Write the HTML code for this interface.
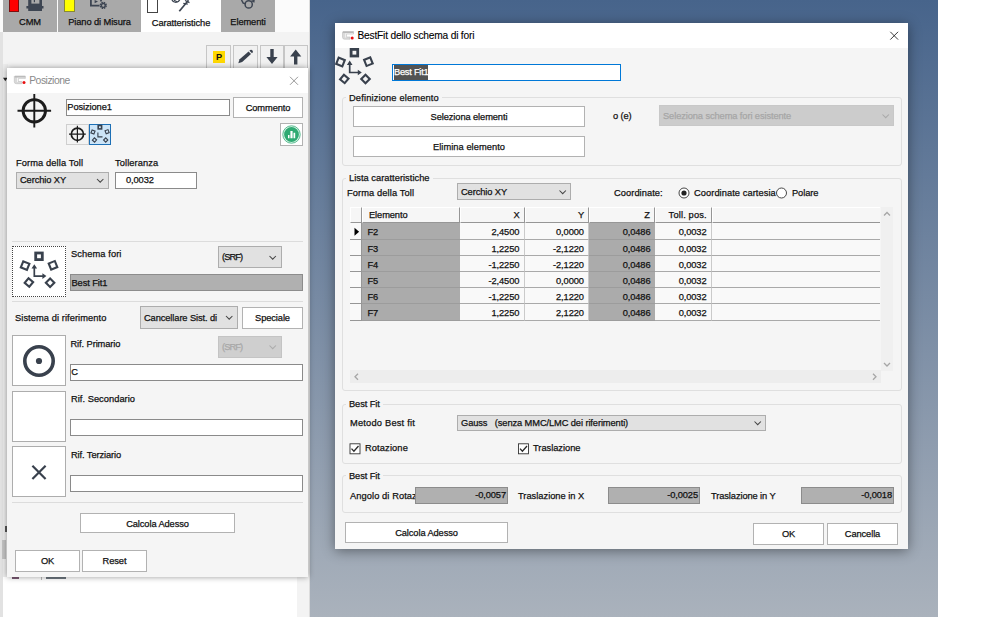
<!DOCTYPE html>
<html lang="it">
<head>
<meta charset="utf-8">
<title>BestFit dello schema di fori</title>
<style>
*{box-sizing:border-box;margin:0;padding:0}
html,body{width:999px;height:617px;overflow:hidden;background:#fff}
body{position:relative;font-family:"Liberation Sans",sans-serif;font-size:9.3px;color:#111;font-weight:normal;letter-spacing:-0.1px;-webkit-text-stroke:0.25px}
.a{position:absolute}
.t{position:absolute;white-space:nowrap;line-height:12px}
.btn{position:absolute;background:#fff;border:1px solid #b2b2b2;text-align:center;white-space:nowrap}
.inp{position:absolute;background:#fff;border:1px solid #8a8a8a;white-space:nowrap;overflow:hidden}
.cmb{position:absolute;background:#e1e1e1;border:1px solid #adadad;white-space:nowrap;overflow:hidden}
.gf{position:absolute;background:#b0b0b0;border:1px solid #8c8c8c;white-space:nowrap;overflow:hidden}
.sep{position:absolute;height:1px;background:#dcdcdc}
.grp{position:absolute;border:1px solid #dfdfdf;border-radius:3px}
.gl{position:absolute;background:#f5f5f5;padding:0 3px;white-space:nowrap;line-height:12px}
.box{position:absolute;background:#fff;border:1px solid #adadad}
svg{position:absolute;overflow:visible}
.th{position:absolute;background:#f6f6f6;border-right:1.5px solid #969696;border-bottom:1.5px solid #969696;border-top:1px solid #fff;border-left:1px solid #fff;line-height:15.6px;white-space:nowrap;overflow:hidden}
.td{position:absolute;background:#f9f9f9;border-bottom:1px solid #a9a9a9;border-right:1px solid #cacaca;line-height:19.6px;white-space:nowrap;overflow:hidden}
.td.g{background:#ababab;border-bottom:1px solid #9c9c9c;border-right:0}
.td.rh{background:#f9f9f9;border-right:1.5px solid #969696;border-bottom:1.5px solid #969696}

</style>
</head>
<body>
<!-- viewport gradient -->
<div class="a" id="bg" style="left:310px;top:0;width:628px;height:617px;background:linear-gradient(180deg,rgb(71,100,139),rgb(170,178,188))"></div>

<!-- left panel -->
<div class="a" id="lp" style="left:0;top:0;width:310px;height:617px;background:#f3f3f3"></div>
<div class="a" style="left:0;top:0;width:309px;height:32px;background:#fbfbfb"></div>
<div class="a" style="left:308.5px;top:0;width:1.5px;height:617px;background:#dcdcdc"></div>
<div class="a" style="left:0;top:577px;width:297px;height:40px;background:#fff"></div>
<div class="a" style="left:0;top:32px;width:2.5px;height:585px;background:#e2e2e2"></div>
<div class="a" style="left:2.5px;top:64px;width:5px;height:513px;background:#ececec"></div>
<div class="a" style="left:1.5px;top:539.5px;width:4.5px;height:19.5px;background:#c2c2c2"></div>
<div class="a" style="left:5px;top:526px;width:1.5px;height:6px;background:#555"></div>
<svg style="left:3px;top:77px" width="5" height="5" viewBox="0 0 5 5"><path d="M0 0.8 H4.6 L2.3 4.2 Z" fill="#222"/></svg>
<div class="a" style="left:12.3px;top:577px;width:7.2px;height:1.5px;background:#5a3050;opacity:.8"></div>
<div class="a" style="left:40.5px;top:577px;width:1px;height:2.5px;background:#bbb"></div>
<div class="a" style="left:46px;top:577px;width:20px;height:1.5px;background:#4a5560;opacity:.8"></div>

<!-- tabs -->
<div class="a" style="left:3px;top:0;width:54px;height:32px;background:#a9a9a9"></div>
<div class="a" style="left:58px;top:0;width:83px;height:32px;background:#a9a9a9"></div>
<div class="a" style="left:141px;top:0;width:80px;height:32px;background:#fff"></div>
<div class="a" style="left:221px;top:0;width:54px;height:32px;background:#a9a9a9"></div>
<div class="a" style="left:9px;top:0;width:10px;height:12px;background:#ff0000;border:1px solid #7a1010;border-top:0"></div>
<div class="a" style="left:64px;top:0;width:11px;height:12px;background:#ffff00;border:1px solid #8a8a30;border-top:0"></div>
<div class="a" style="left:147px;top:0;width:11px;height:13px;background:#fff;border:1px solid #444;border-top:0"></div>
<div class="t" style="left:3px;width:54px;top:16px;text-align:center">CMM</div>
<div class="t" style="left:58px;width:83px;top:16px;text-align:center">Piano di Misura</div>
<div class="t" style="left:141px;width:80px;top:17px;text-align:center">Caratteristiche</div>
<div class="t" style="left:221px;width:54px;top:16px;text-align:center">Elementi</div>

<!-- toolbar buttons -->
<div class="btn" style="left:206px;top:45px;width:25px;height:24px;background:#f1f1f1;border-color:#c6c6c6"></div>
<div class="btn" style="left:233px;top:45px;width:25px;height:24px;background:#f1f1f1;border-color:#c6c6c6"></div>
<div class="btn" style="left:260px;top:45px;width:24px;height:24px;background:#f1f1f1;border-color:#c6c6c6"></div>
<div class="btn" style="left:284px;top:45px;width:24px;height:24px;background:#f1f1f1;border-color:#c6c6c6"></div>
<div class="a" style="left:213px;top:51px;width:12px;height:12px;background:#ffd800;text-align:center;line-height:12.5px;font-size:9.2px;font-weight:bold;-webkit-text-stroke:0">P</div>

<!-- Posizione dialog -->
<div class="a" id="d1" style="left:7px;top:68px;width:301px;height:509px;background:#f5f5f5;box-shadow:0 0 6px rgba(0,0,0,.4)"></div>
<div class="a" style="left:7px;top:68px;width:301px;height:25px;background:#fff"></div>
<div class="t" style="left:29.2px;top:74.5px;font-size:10.4px;color:#8a8a8a;letter-spacing:-0.5px;-webkit-text-stroke:0">Posizione</div>

<div class="inp" style="left:66px;top:99px;width:164px;height:17px;line-height:15px;padding-left:0.3px">Posizione1</div>
<div class="btn" style="left:233px;top:97px;width:70px;height:21px;line-height:20px">Commento</div>
<div class="btn" style="left:66px;top:123.5px;width:23px;height:21.5px;background:#f3f3f3;border-color:#cfcfcf"></div>
<div class="btn" style="left:88.7px;top:123.5px;width:22.5px;height:21.5px;background:#cce4f7;border:1.4px solid #1c6fb5"></div>
<div class="btn" style="left:280px;top:123px;width:23px;height:23px"></div>

<div class="t" style="left:16px;top:157px;letter-spacing:0.1px">Forma della Toll</div>
<div class="t" style="left:115px;top:157px;letter-spacing:0.09px">Tolleranza</div>
<div class="cmb" style="left:16px;top:172px;width:93px;height:17px;line-height:15px;padding-left:3px">Cerchio XY</div>
<div class="inp" style="left:115px;top:172px;width:82px;height:17px;line-height:15px;padding-left:10px">0,0032</div>

<div class="sep" style="left:12px;top:241px;width:291px"></div>
<div class="box" style="left:12px;top:246px;width:54px;height:51px;border:1px dotted #444"></div>
<div class="t" style="left:71px;top:248px;letter-spacing:0.08px">Schema fori</div>
<div class="cmb" style="left:218px;top:246px;width:64px;height:22px;line-height:21px;padding-left:3px;letter-spacing:-0.9px">(SRF)</div>
<div class="gf" style="left:70px;top:274px;width:233px;height:17px;line-height:17px;padding-left:0.5px">Best Fit1</div>
<div class="sep" style="left:12px;top:301px;width:291px"></div>

<div class="t" style="left:15px;top:312px;letter-spacing:0.07px">Sistema di riferimento</div>
<div class="cmb" style="left:140px;top:306px;width:98px;height:23px;line-height:23px;padding-left:3px">Cancellare Sist. di</div>
<div class="btn" style="left:242px;top:307px;width:61px;height:22px;line-height:21px">Speciale</div>

<div class="box" style="left:12px;top:335px;width:54px;height:51px"></div>
<div class="t" style="left:70.5px;top:338px">Rif. Primario</div>
<div class="cmb" style="left:218px;top:336px;width:64px;height:22px;line-height:20px;padding-left:3px;background:#cfcfcf;border-color:#c4c4c4;color:#a8a8a8;letter-spacing:-0.9px">(SRF)</div>
<div class="inp" style="left:70px;top:364px;width:233px;height:17px;line-height:15px;padding-left:0.3px">C</div>

<div class="box" style="left:12px;top:391px;width:54px;height:51px"></div>
<div class="t" style="left:71px;top:393px;letter-spacing:0.03px">Rif. Secondario</div>
<div class="inp" style="left:70px;top:419px;width:233px;height:17px"></div>

<div class="box" style="left:12px;top:446px;width:54px;height:51px"></div>
<div class="t" style="left:71px;top:449px">Rif. Terziario</div>
<div class="inp" style="left:70px;top:475px;width:233px;height:17px"></div>
<div class="sep" style="left:12px;top:502px;width:291px"></div>

<div class="btn" style="left:80px;top:513px;width:155px;height:20px;line-height:21px">Calcola Adesso</div>
<div class="btn" style="left:15px;top:550px;width:65px;height:22px;line-height:21px">OK</div>
<div class="btn" style="left:82px;top:550px;width:65px;height:22px;line-height:21px">Reset</div>

<!-- BestFit dialog -->
<div class="a" id="d2" style="left:335px;top:23px;width:573px;height:526px;background:#f5f5f5;box-shadow:0 2px 12px rgba(0,0,0,.42)"></div>
<div class="a" style="left:335px;top:23px;width:573px;height:25px;background:#fff"></div>
<div class="t" style="left:357.5px;top:30.2px;font-size:10.2px;color:#000;font-weight:normal;letter-spacing:-0.2px;-webkit-text-stroke:0.1px">BestFit dello schema di fori</div>

<div class="inp" style="left:392px;top:64px;width:229px;height:17px;border-color:#0078d7;line-height:15px;padding-left:1px"><span style="background:#535353;color:#fff;display:inline-block;height:15px;letter-spacing:-0.25px">Best Fit1</span></div>

<div class="grp" style="left:342px;top:97px;width:560px;height:69px"></div>
<div class="gl" style="left:346px;top:92px;letter-spacing:0.15px">Definizione elemento</div>
<div class="btn" style="left:353px;top:106px;width:232px;height:21px;line-height:20px">Seleziona elementi</div>
<div class="btn" style="left:353px;top:136px;width:232px;height:21px;line-height:20px;letter-spacing:0.05px">Elimina elemento</div>
<div class="t" style="left:613px;top:110px">o (e)</div>
<div class="cmb" style="left:659px;top:105px;width:235px;height:21px;line-height:20px;padding-left:3px;background:#cccccc;border-color:#c8c8c8;color:#a6a6a6">Seleziona schema fori esistente</div>

<div class="grp" style="left:342px;top:178px;width:560px;height:213px"></div>
<div class="gl" style="left:346px;top:172.3px;letter-spacing:0.02px">Lista caratteristiche</div>
<div class="t" style="left:347px;top:187px;letter-spacing:0.1px">Forma della Toll</div>
<div class="cmb" style="left:457px;top:183px;width:114px;height:17px;line-height:16px;padding-left:3px">Cerchio XY</div>
<div class="t" style="left:614px;top:187px;letter-spacing:0.06px">Coordinate:</div>
<div class="t" style="left:694px;top:187px;letter-spacing:0.06px">Coordinate cartesia</div>
<div class="t" style="left:792px;top:187px">Polare</div>

<!-- table -->
<div class="a" style="left:350px;top:206.5px;width:543px;height:177px;background:#f5f5f5"></div>
<div class="th" style="left:350px;top:206.5px;width:12.0px;height:16.8px;text-align:left;padding-right:4px"></div>
<div class="th" style="left:362px;top:206.5px;width:97.5px;height:16.8px;text-align:left;padding-left:6px">Elemento</div>
<div class="th" style="left:459.5px;top:206.5px;width:65.1px;height:16.8px;text-align:right;padding-right:4px">X</div>
<div class="th" style="left:524.6px;top:206.5px;width:64.6px;height:16.8px;text-align:right;padding-right:4px">Y</div>
<div class="th" style="left:589.2px;top:206.5px;width:65.6px;height:16.8px;text-align:right;padding-right:4px">Z</div>
<div class="th" style="left:654.8px;top:206.5px;width:57.0px;height:16.8px;text-align:right;padding-right:4px;letter-spacing:0.15px">Toll. pos.</div>
<div class="th" style="left:711.8px;top:206.5px;width:168.7px;height:16.8px;text-align:right;padding-right:4px;border-right:0"></div>
<div class="td rh" style="left:350px;top:223.30px;width:12.0px;height:16.22px;text-align:left;padding-right:4.3px"></div>
<div class="td g" style="left:362px;top:223.30px;width:97.5px;height:16.22px;text-align:left;padding-left:5.5px">F2</div>
<div class="td" style="left:459.5px;top:223.30px;width:65.1px;height:16.22px;text-align:right;padding-right:4.3px">2,4500</div>
<div class="td" style="left:524.6px;top:223.30px;width:64.6px;height:16.22px;text-align:right;padding-right:4.3px">0,0000</div>
<div class="td g" style="left:589.2px;top:223.30px;width:65.6px;height:16.22px;text-align:right;padding-right:4.3px">0,0486</div>
<div class="td" style="left:654.8px;top:223.30px;width:57.0px;height:16.22px;text-align:right;padding-right:4.3px">0,0032</div>
<div class="td" style="left:711.8px;top:223.30px;width:168.7px;height:16.22px;text-align:right;padding-right:4.3px;border-right:0"></div>
<div class="td rh" style="left:350px;top:239.52px;width:12.0px;height:16.22px;text-align:left;padding-right:4.3px"></div>
<div class="td g" style="left:362px;top:239.52px;width:97.5px;height:16.22px;text-align:left;padding-left:5.5px">F3</div>
<div class="td" style="left:459.5px;top:239.52px;width:65.1px;height:16.22px;text-align:right;padding-right:4.3px">1,2250</div>
<div class="td" style="left:524.6px;top:239.52px;width:64.6px;height:16.22px;text-align:right;padding-right:4.3px">-2,1220</div>
<div class="td g" style="left:589.2px;top:239.52px;width:65.6px;height:16.22px;text-align:right;padding-right:4.3px">0,0486</div>
<div class="td" style="left:654.8px;top:239.52px;width:57.0px;height:16.22px;text-align:right;padding-right:4.3px">0,0032</div>
<div class="td" style="left:711.8px;top:239.52px;width:168.7px;height:16.22px;text-align:right;padding-right:4.3px;border-right:0"></div>
<div class="td rh" style="left:350px;top:255.74px;width:12.0px;height:16.22px;text-align:left;padding-right:4.3px"></div>
<div class="td g" style="left:362px;top:255.74px;width:97.5px;height:16.22px;text-align:left;padding-left:5.5px">F4</div>
<div class="td" style="left:459.5px;top:255.74px;width:65.1px;height:16.22px;text-align:right;padding-right:4.3px">-1,2250</div>
<div class="td" style="left:524.6px;top:255.74px;width:64.6px;height:16.22px;text-align:right;padding-right:4.3px">-2,1220</div>
<div class="td g" style="left:589.2px;top:255.74px;width:65.6px;height:16.22px;text-align:right;padding-right:4.3px">0,0486</div>
<div class="td" style="left:654.8px;top:255.74px;width:57.0px;height:16.22px;text-align:right;padding-right:4.3px">0,0032</div>
<div class="td" style="left:711.8px;top:255.74px;width:168.7px;height:16.22px;text-align:right;padding-right:4.3px;border-right:0"></div>
<div class="td rh" style="left:350px;top:271.96px;width:12.0px;height:16.22px;text-align:left;padding-right:4.3px"></div>
<div class="td g" style="left:362px;top:271.96px;width:97.5px;height:16.22px;text-align:left;padding-left:5.5px">F5</div>
<div class="td" style="left:459.5px;top:271.96px;width:65.1px;height:16.22px;text-align:right;padding-right:4.3px">-2,4500</div>
<div class="td" style="left:524.6px;top:271.96px;width:64.6px;height:16.22px;text-align:right;padding-right:4.3px">0,0000</div>
<div class="td g" style="left:589.2px;top:271.96px;width:65.6px;height:16.22px;text-align:right;padding-right:4.3px">0,0486</div>
<div class="td" style="left:654.8px;top:271.96px;width:57.0px;height:16.22px;text-align:right;padding-right:4.3px">0,0032</div>
<div class="td" style="left:711.8px;top:271.96px;width:168.7px;height:16.22px;text-align:right;padding-right:4.3px;border-right:0"></div>
<div class="td rh" style="left:350px;top:288.18px;width:12.0px;height:16.22px;text-align:left;padding-right:4.3px"></div>
<div class="td g" style="left:362px;top:288.18px;width:97.5px;height:16.22px;text-align:left;padding-left:5.5px">F6</div>
<div class="td" style="left:459.5px;top:288.18px;width:65.1px;height:16.22px;text-align:right;padding-right:4.3px">-1,2250</div>
<div class="td" style="left:524.6px;top:288.18px;width:64.6px;height:16.22px;text-align:right;padding-right:4.3px">2,1220</div>
<div class="td g" style="left:589.2px;top:288.18px;width:65.6px;height:16.22px;text-align:right;padding-right:4.3px">0,0486</div>
<div class="td" style="left:654.8px;top:288.18px;width:57.0px;height:16.22px;text-align:right;padding-right:4.3px">0,0032</div>
<div class="td" style="left:711.8px;top:288.18px;width:168.7px;height:16.22px;text-align:right;padding-right:4.3px;border-right:0"></div>
<div class="td rh" style="left:350px;top:304.40px;width:12.0px;height:16.22px;text-align:left;padding-right:4.3px"></div>
<div class="td g" style="left:362px;top:304.40px;width:97.5px;height:16.22px;text-align:left;padding-left:5.5px">F7</div>
<div class="td" style="left:459.5px;top:304.40px;width:65.1px;height:16.22px;text-align:right;padding-right:4.3px">1,2250</div>
<div class="td" style="left:524.6px;top:304.40px;width:64.6px;height:16.22px;text-align:right;padding-right:4.3px">2,1220</div>
<div class="td g" style="left:589.2px;top:304.40px;width:65.6px;height:16.22px;text-align:right;padding-right:4.3px">0,0486</div>
<div class="td" style="left:654.8px;top:304.40px;width:57.0px;height:16.22px;text-align:right;padding-right:4.3px">0,0032</div>
<div class="td" style="left:711.8px;top:304.40px;width:168.7px;height:16.22px;text-align:right;padding-right:4.3px;border-right:0"></div>
<svg style="left:354px;top:227px" width="5" height="8" viewBox="-0.5 -0.8 5 8"><path d="M0 0 L4.6 4 L0 8 Z" fill="#000"/></svg>
<div class="a" style="left:880.5px;top:206.5px;width:12.5px;height:164px;background:#f0f0f0"></div>
<div class="a" style="left:350px;top:370.3px;width:530.5px;height:13px;background:#ededed"></div>
<svg style="left:883px;top:211px" width="7" height="5" viewBox="-0.5 -0.5 7 5"><path d="M0.5 4 L3.5 1 L6.5 4" fill="none" stroke="#a6a6a6" stroke-width="1.3"/></svg>
<svg style="left:883px;top:362px" width="7" height="5" viewBox="-0.5 0 7 5"><path d="M0.5 1 L3.5 4 L6.5 1" fill="none" stroke="#a6a6a6" stroke-width="1.3"/></svg>
<svg style="left:354px;top:373px" width="5" height="7" viewBox="0 -0.3 5 7"><path d="M4 0.5 L1 3.5 L4 6.5" fill="none" stroke="#a6a6a6" stroke-width="1.3"/></svg>
<svg style="left:872px;top:373px" width="5" height="7" viewBox="0 -0.3 5 7"><path d="M1 0.5 L4 3.5 L1 6.5" fill="none" stroke="#a6a6a6" stroke-width="1.3"/></svg>


<div class="grp" style="left:342px;top:404px;width:560px;height:60px"></div>
<div class="gl" style="left:346px;top:398.4px">Best Fit</div>
<div class="t" style="left:350px;top:417px;letter-spacing:0.2px">Metodo Best fit</div>
<div class="cmb" style="left:457px;top:415px;width:309px;height:16px;line-height:14px;padding-left:3px">Gauss &nbsp;&nbsp;(senza MMC/LMC dei riferimenti)</div>
<div class="t" style="left:365px;top:442px;letter-spacing:0.12px">Rotazione</div>
<div class="t" style="left:533px;top:442px;letter-spacing:-0.02px">Traslazione</div>

<div class="grp" style="left:342px;top:475px;width:560px;height:38px"></div>
<div class="gl" style="left:346px;top:470px">Best Fit</div>
<div class="t" style="left:350px;top:490px;letter-spacing:0.08px">Angolo di Rotazione</div>
<div class="gf" style="left:415px;top:487px;width:93px;height:17px;line-height:15px;text-align:right;padding-right:1px">-0,0057</div>
<div class="t" style="left:518px;top:490px;letter-spacing:0.0px">Traslazione in X</div>
<div class="gf" style="left:608px;top:487px;width:92px;height:17px;line-height:15px;text-align:right;padding-right:1px">-0,0025</div>
<div class="t" style="left:711px;top:490px">Traslazione in Y</div>
<div class="gf" style="left:801px;top:487px;width:93px;height:17px;line-height:15px;text-align:right;padding-right:1px">-0,0018</div>

<div class="btn" style="left:345px;top:522px;width:163px;height:21px;line-height:20px">Calcola Adesso</div>
<div class="btn" style="left:753px;top:523px;width:71px;height:22px;line-height:21px">OK</div>
<div class="btn" style="left:827px;top:523px;width:71px;height:22px;line-height:21px">Cancella</div>
<!-- icons -->
<svg width="0" height="0" style="left:0;top:0"><defs>
<g id="pat" fill="none" stroke="#39414d">
<rect x="-3.3" y="-3.3" width="6.6" height="6.6" stroke-width="2.8"/>
<rect x="-3.3" y="-3.3" width="6.6" height="6.6" stroke-width="2.1" transform="translate(-13.9,9.3) rotate(22)"/>
<rect x="-3.3" y="-3.3" width="6.6" height="6.6" stroke-width="2.1" transform="translate(14,9) rotate(-22)"/>
<rect x="-3" y="-3" width="6" height="6" stroke-width="2.1" transform="translate(-10.1,26.2) rotate(40)"/>
<rect x="-3" y="-3" width="6" height="6" stroke-width="2.1" transform="translate(11.1,26.4) rotate(45)"/>
<path d="M-4.7 10.5 V19.8 H5" stroke-width="1.7"/>
<path d="M-4.7 7.9 L-7.5 12.2 H-1.9 Z M7.4 19.8 L3.4 17 V22.6 Z" fill="#39414d" stroke="none"/>
</g>
<g id="chev" fill="none" stroke="#454545" stroke-width="1.05"><path d="M0 0 L3.2 3.2 L6.4 0"/></g>
<g id="wicon"><path d="M1 0.5 H11.5 V3 H4.5 V6 H8 V8.2 H2.5 Q0.5 8.2 0.5 6.2 V1 Z" fill="#d9d9d9" stroke="#bdbdbd" stroke-width="0.6"/><path d="M1 0.6 H11.4 V2 H1 Z" fill="#b9b9b9"/><path d="M3.2 2.2 H11 V2.8 H4.2 V6.5 H3.2 Z" fill="#f4f4f4"/><circle cx="10.2" cy="7" r="1.5" fill="#e81010"/></g>
</defs></svg>

<!-- tab icons -->
<svg style="left:26px;top:0" width="18" height="12" viewBox="0 0 18 12"><path d="M2.2 0 H16 V6 H17.5 V8.6 H16 V11 H2.2 V8.6 H0.4 V6 H2.2 Z" fill="#3d4552"/><rect x="5.4" y="0" width="8" height="3.6" fill="#a9a9a9"/><rect x="7.8" y="0" width="1.2" height="2.2" fill="#3d4552"/></svg>
<svg style="left:89px;top:0" width="20" height="10" viewBox="0 0 20 10"><path d="M1.9 0 V5.7 H10.5" fill="none" stroke="#3d4552" stroke-width="1.8"/><path d="M12 0 V1.6" fill="none" stroke="#3d4552" stroke-width="1.8"/><path d="M5.6 0 L9 1.5 L5.6 3.2 Z" fill="#3d4552"/><circle cx="14.3" cy="5.4" r="2.6" fill="none" stroke="#3d4552" stroke-width="2" stroke-dasharray="1.36 0.68"/><circle cx="14.3" cy="5.4" r="1.9" fill="none" stroke="#3d4552" stroke-width="1.3"/></svg>
<svg style="left:170px;top:0" width="22" height="13" viewBox="0 0 22 13"><path d="M2 0 A4.2 4.2 0 0 0 9.6 0" fill="none" stroke="#3d4552" stroke-width="1.4"/><path d="M9.3 11.2 L18.5 0.3" stroke="#3d4552" stroke-width="1.7"/><path d="M13.3 3.4 L17.8 4.2 M15 0.5 L19.5 2.6" stroke="#3d4552" stroke-width="1.2"/><path d="M4 0.2 L7.5 2" stroke="#3d4552" stroke-width="1.1"/></svg>
<svg style="left:240px;top:0" width="16" height="10" viewBox="0 0 16 10"><circle cx="8.7" cy="4.4" r="3.6" fill="none" stroke="#3d4552" stroke-width="1.5"/><path d="M1.5 0 L3.2 3.2 L6 3.8 M11.5 0.6 L13.8 1.6 L14 0" fill="none" stroke="#3d4552" stroke-width="1.5"/></svg>

<!-- toolbar icons -->
<svg style="left:237px;top:48px" width="18" height="17" viewBox="0 0 18 17"><path d="M1.3 15.3 L2.6 11.2 L11.6 3.4 L14 6 L5.2 14 Z" fill="#39414d"/><path d="M12.4 2.7 Q14 1 15.5 2.4 Q16.8 3.8 15 5.3 Z" fill="#39414d"/></svg>
<svg style="left:266px;top:48px" width="12" height="16" viewBox="0 -0.5 12 16"><path d="M4.3 0.5 H7.7 V8.6 H11.6 L6 15.6 L0.4 8.6 H4.3 Z" fill="#39414d"/></svg>
<svg style="left:289px;top:49px" width="12" height="16" viewBox="-0.7 0 12 16"><path d="M4.3 15.6 H7.7 V7.4 H11.6 L6 0.4 L0.4 7.4 H4.3 Z" fill="#39414d"/></svg>

<!-- Posizione title -->
<svg style="left:13px;top:75px" width="12" height="9" viewBox="-0.8 -0.5 12 9"><use href="#wicon"/></svg>
<svg style="left:289px;top:76px" width="9" height="9" viewBox="-0.5 -0.3 9 9"><path d="M0.5 0.5 L8.5 8.5 M8.5 0.5 L0.5 8.5" stroke="#8c8c8c" stroke-width="0.9"/></svg>

<!-- crosshairs -->
<svg style="left:16px;top:93px" width="35" height="35" viewBox="-18.3 -17.8 35 35"><circle r="11.2" fill="none" stroke="#1c1c1c" stroke-width="2.9"/><path d="M-16.8 0 H16.8 M0 -16.8 V16.8" stroke="#1c1c1c" stroke-width="1.9"/></svg>
<svg style="left:68px;top:125px" width="18" height="18" viewBox="-9.4 -9.2 18 18"><circle r="6.1" fill="none" stroke="#1c1c1c" stroke-width="1.7"/><path d="M-8.4 0 H8.4 M0 -8.4 V8.4" stroke="#1c1c1c" stroke-width="1.2"/></svg>
<svg style="left:89px;top:124px" width="22" height="21" viewBox="0 0 22 21"><g fill="none" stroke="#39414d"><rect x="9.2" y="1.5" width="3.4" height="3.4" stroke-width="1.6"/><rect x="-1.6" y="-1.6" width="3.2" height="3.2" stroke-width="1.1" transform="translate(4,8) rotate(22)"/><rect x="-1.6" y="-1.6" width="3.2" height="3.2" stroke-width="1.1" transform="translate(18.1,7.7) rotate(-22)"/><rect x="-1.5" y="-1.5" width="3" height="3" stroke-width="1.1" transform="translate(5.5,16) rotate(42)"/><rect x="-1.5" y="-1.5" width="3" height="3" stroke-width="1.1" transform="translate(16.7,16) rotate(45)"/><path d="M8.9 8.5 V12.9 H13.5" stroke-width="1.1"/></g></svg>

<!-- green icon -->
<svg style="left:281px;top:124px" width="21" height="21" viewBox="-10.5 -10.5 21 21"><circle r="8.7" fill="#e6f6ee" stroke="#43b482" stroke-width="0.9"/><circle r="7.4" fill="#2eaa72"/><path d="M-3.5 0.6 H-2 V3.7 H-3.5 Z M-1.1 -3.6 H1.1 V3.7 H-1.1 Z M2 -1.7 H3.7 V3.7 H2 Z" fill="#fff"/></svg>

<!-- pattern icons -->
<svg style="left:12px;top:246px" width="54" height="51" viewBox="0 0 54 51"><g transform="translate(27,10.3)"><use href="#pat"/></g></svg>
<svg style="left:335px;top:48px" width="40" height="38" viewBox="0 0 40 38"><g transform="translate(19.4,4.7)"><use href="#pat"/></g></svg>

<!-- circle dot, X -->
<svg style="left:21px;top:343px" width="36" height="36" viewBox="-18 -18 36 36"><circle r="14.2" fill="none" stroke="#39414d" stroke-width="3.6"/><circle r="3.1" fill="#39414d"/></svg>
<svg style="left:31px;top:464px" width="16" height="16" viewBox="-8 -8.4 16 16"><path d="M-6.6 -6.6 L6.6 6.6 M6.6 -6.6 L-6.6 6.6" stroke="#39414d" stroke-width="2.2"/></svg>

<!-- BestFit title -->
<svg style="left:342px;top:31px" width="12" height="9" viewBox="0 0 12 9"><use href="#wicon"/></svg>
<svg style="left:889px;top:31px" width="9" height="9" viewBox="-0.7 -0.2 9 9"><path d="M0.6 0.6 L8.4 8.4 M8.4 0.6 L0.6 8.4" stroke="#222" stroke-width="0.9"/></svg>

<!-- chevrons -->
<svg style="left:97px;top:179px" width="7" height="4"><use href="#chev"/></svg>
<svg viewBox="-0.5 -0 7 4" style="left:269px;top:256px" width="7" height="4"><use href="#chev"/></svg>
<svg style="left:226px;top:316px" width="7" height="4"><use href="#chev"/></svg>
<svg viewBox="-0.5 -0.5 7 4" style="left:269px;top:345px" width="7" height="4" opacity="0.25"><use href="#chev"/></svg>
<svg viewBox="-0.5 -0.5 7 4" style="left:559px;top:190px" width="7" height="4"><use href="#chev"/></svg>
<svg viewBox="-0.5 -0.5 7 4" style="left:882px;top:114px" width="7" height="4" opacity="0.25"><use href="#chev"/></svg>
<svg viewBox="-0.5 -0.5 7 4" style="left:754px;top:421px" width="7" height="4"><use href="#chev"/></svg>

<!-- radios, checkboxes -->
<svg style="left:678px;top:187px" width="12" height="12" viewBox="-6 -6 12 12"><circle r="5" fill="#fff" stroke="#333" stroke-width="0.9"/><circle r="2.6" fill="#222"/></svg>
<svg style="left:775px;top:187px" width="12" height="12" viewBox="-6.5 -6 12 12"><circle r="5" fill="#fff" stroke="#333" stroke-width="0.9"/></svg>
<svg style="left:349px;top:443px" width="11" height="11" viewBox="-0.5 -0.3 11 11"><rect x="0.5" y="0.5" width="10" height="10" fill="#fff" stroke="#333" stroke-width="0.9"/><path d="M2 5.3 L4.4 7.9 L9 2.7" fill="none" stroke="#2a2a2a" stroke-width="1.3"/></svg>
<svg style="left:518px;top:443px" width="11" height="11" viewBox="0 -0.3 11 11"><rect x="0.5" y="0.5" width="10" height="10" fill="#fff" stroke="#333" stroke-width="0.9"/><path d="M2 5.3 L4.4 7.9 L9 2.7" fill="none" stroke="#2a2a2a" stroke-width="1.3"/></svg>
<!-- /icons -->
</body>
</html>
